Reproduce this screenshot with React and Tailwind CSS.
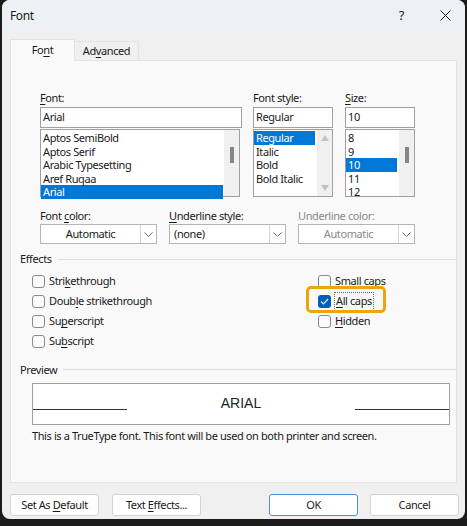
import React from 'react';

const ui = { fontFamily: '"Noto Sans", "Open Sans", sans-serif', letterSpacing: '-0.4px' };

function Acc({ children }) {
  return <span className="underline underline-offset-2">{children}</span>;
}

function ListBox({ items, selected, className, selWidth, scroll }) {
  return (
    <div className={`relative h-[68px] border border-[#a0a0a0] bg-white ${className}`}>
      <div className="pt-[1px]">
        {items.map(it => (
          <div
            key={it}
            className={`h-[13.6px] leading-[13.6px] pl-[2px] ${it === selected ? 'bg-[#0078d7] text-white' : ''}`}
            style={it === selected ? { width: selWidth } : undefined}
          >
            {it}
          </div>
        ))}
      </div>
      {scroll === 'thumb' && (
        <div className="absolute right-0 top-0 bottom-0 w-[15px] bg-[#f0f0f0]">
          <div className="absolute left-[6px] top-[17px] w-[4px] h-[16px] bg-[#858585]" />
        </div>
      )}
      {scroll === 'arrows' && (
        <div className="absolute right-0 top-0 bottom-0 w-[15px] bg-[#f0f0f0] flex flex-col justify-between items-center py-[5px]">
          <svg width="8" height="6" viewBox="0 0 8 6"><path d="M4 0 L8 6 L0 6 Z" fill="#c2c2c2" /></svg>
          <svg width="8" height="6" viewBox="0 0 8 6"><path d="M0 0 L8 0 L4 6 Z" fill="#c2c2c2" /></svg>
        </div>
      )}
    </div>
  );
}

function Combo({ value, disabled, left, className }) {
  return (
    <div className={`flex h-[20px] border border-[#b5b5b5] bg-white ${className}`}>
      <div className={`flex-1 flex items-center ${left ? 'pl-[4px]' : 'justify-center'} ${disabled ? 'text-[#8a8a8a]' : ''}`}>
        {value}
      </div>
      <div className="w-[16px] border-l border-[#d5d5d5] flex items-center justify-center">
        <svg width="9" height="5" viewBox="0 0 9 5"><path d="M0.5 0.5 L4.5 4.5 L8.5 0.5" fill="none" stroke="#6a6a6a" strokeWidth="1" /></svg>
      </div>
    </div>
  );
}

function Check({ label, checked }) {
  return (
    <div className="flex items-center gap-[4px] h-[20px]">
      {checked ? (
        <div className="w-[13px] h-[13px] rounded-[3px] bg-[#005fb8] flex items-center justify-center">
          <svg width="9" height="7" viewBox="0 0 9 7"><path d="M1 3.5 L3.5 6 L8 1" fill="none" stroke="#dce9f7" strokeWidth="1.2" /></svg>
        </div>
      ) : (
        <div className="w-[13px] h-[13px] rounded-[3px] border border-[#8a8a8a] bg-[#fbfbfb]" />
      )}
      <span className={checked ? 'outline-1 outline-dotted outline-[#6a6a6a] px-[1px]' : ''}>{label}</span>
    </div>
  );
}

function Group({ title }) {
  return (
    <div className="flex items-center gap-[6px]">
      <span>{title}</span>
      <div className="flex-1 h-px bg-[#dedede]" />
    </div>
  );
}

function Button({ children, primary, className }) {
  return (
    <button className={`h-[22px] rounded-[3px] bg-white text-[11px] text-[#1a1a1a] border ${primary ? 'border-[#4a90d6]' : 'border-[#d3d3d3]'} ${className}`}>
      {children}
    </button>
  );
}

export default function App() {
  return (
    <div className="w-[467px] h-[526px] bg-[#1c1c1c] pl-[2px] text-[11px] text-[#1a1a1a]" style={ui}>
      <div className="w-[463px] h-[519px] rounded-lg overflow-hidden bg-[#f0f0f0] flex flex-col">
        {/* title bar */}
        <div className="h-[31px] bg-[#edf1f5] flex items-center pl-[8px] pr-[14px]">
          <span className="text-[12px] flex-1">Font</span>
          <span className="text-[13px] mr-[36px]">?</span>
          <svg width="11" height="11" viewBox="0 0 11 11"><path d="M0.5 0.5 L10.5 10.5 M10.5 0.5 L0.5 10.5" stroke="#1a1a1a" strokeWidth="1" /></svg>
        </div>

        {/* tabs */}
        <div className="flex pl-[8px] pt-[7px] h-[29px] items-end">
          <div className="w-[65px] h-[22px] bg-[#f9f9f9] border border-b-0 border-[#e3e3e3] flex items-center justify-center relative top-px">
            Fo<Acc>n</Acc>t
          </div>
          <div className="w-[64px] h-[19px] bg-[#f0f0f0] border border-b-0 border-l-0 border-[#e3e3e3] flex items-center justify-center">
            Ad<Acc>v</Acc>anced
          </div>
        </div>

        {/* tab panel */}
        <div className="mx-[8px] h-[423px] bg-[#f9f9f9] border border-[#e3e3e3] flex flex-col">
          <div className="flex pl-[29px] pt-[29px]">
            <div className="w-[202px]">
              <div className="h-[17px]"><Acc>F</Acc>ont:</div>
              <div className="h-[21px] border border-[#a0a0a0] bg-white pl-[2px] flex items-center mb-[1px]">Arial</div>
              <ListBox
                className="w-[200px]"
                items={['Aptos SemiBold', 'Aptos Serif', 'Arabic Typesetting', 'Aref Ruqaa', 'Arial']}
                selected="Arial"
                selWidth="182px"
                scroll="thumb"
              />
            </div>
            <div className="w-[80px] ml-[11px]">
              <div className="h-[17px]">Font style:</div>
              <div className="h-[21px] border border-[#a0a0a0] bg-white pl-[2px] flex items-center mb-[1px]">Regular</div>
              <ListBox
                items={['Regular', 'Italic', 'Bold', 'Bold Italic']}
                selected="Regular"
                selWidth="61px"
                scroll="arrows"
              />
            </div>
            <div className="w-[70px] ml-[12px]">
              <div className="h-[17px]"><Acc>S</Acc>ize:</div>
              <div className="h-[21px] border border-[#a0a0a0] bg-white pl-[2px] flex items-center mb-[1px]">10</div>
              <ListBox
                items={['8', '9', '10', '11', '12']}
                selected="10"
                selWidth="51px"
                scroll="thumb"
              />
            </div>
          </div>

          <div className="flex pl-[29px] pt-[11px] gap-[12px]">
            <div className="w-[117px]">
              <div className="h-[16px]">Font <Acc>c</Acc>olor:</div>
              <Combo value="Automatic" />
            </div>
            <div className="w-[117px]">
              <div className="h-[16px]"><Acc>U</Acc>nderline style:</div>
              <Combo value="(none)" left />
            </div>
            <div className="w-[117px]">
              <div className="h-[16px] text-[#8a8a8a]">Underline color:</div>
              <Combo value="Automatic" disabled />
            </div>
          </div>

          <div className="pl-[9px] pt-[7px]">
            <Group title="Effects" />
          </div>
          <div className="flex pl-[21px] pt-[4px]">
            <div className="w-[286px]">
              <Check label={<>Stri<Acc>k</Acc>ethrough</>} />
              <Check label={<>Doub<Acc>l</Acc>e strikethrough</>} />
              <Check label={<>Su<Acc>p</Acc>erscript</>} />
              <Check label={<>Su<Acc>b</Acc>script</>} />
            </div>
            <div>
              <Check label={<>S<Acc>m</Acc>all caps</>} />
              <div className="relative">
                <div className="absolute left-[-12px] top-[-6px] w-[80px] h-[27px] rounded-[5px] border-[3px] border-[#f0a30a]" />
                <Check label={<><Acc>A</Acc>ll caps</>} checked />
              </div>
              <Check label={<><Acc>H</Acc>idden</>} />
            </div>
          </div>

          <div className="pl-[9px] pt-[10px]">
            <Group title="Preview" />
          </div>
          <div className="ml-[21px] mt-[5px] w-[418px] h-[42px] border border-[#a0a0a0] bg-white flex items-center relative">
            <div className="absolute left-0 top-[25px] w-[94px] h-px bg-[#333]" />
            <div className="absolute right-0 top-[25px] w-[94px] h-px bg-[#333]" />
            <span className="w-full text-center text-[14px] text-[#222] -mt-[1px] tracking-normal" style={{ fontFamily: '"Liberation Sans", Arial, sans-serif' }}>ARIAL</span>
          </div>
          <div className="pl-[21px] pt-[3px]">This is a TrueType font. This font will be used on both printer and screen.</div>
        </div>

        {/* buttons */}
        <div className="flex pl-[8px] pt-[11px]">
          <Button className="w-[89px]">Set As <Acc>D</Acc>efault</Button>
          <Button className="w-[89px] ml-[13px]">Text <Acc>E</Acc>ffects...</Button>
          <Button className="w-[89px] ml-[68px]" primary>OK</Button>
          <Button className="w-[89px] ml-[12px]">Cancel</Button>
        </div>
      </div>
    </div>
  );
}
